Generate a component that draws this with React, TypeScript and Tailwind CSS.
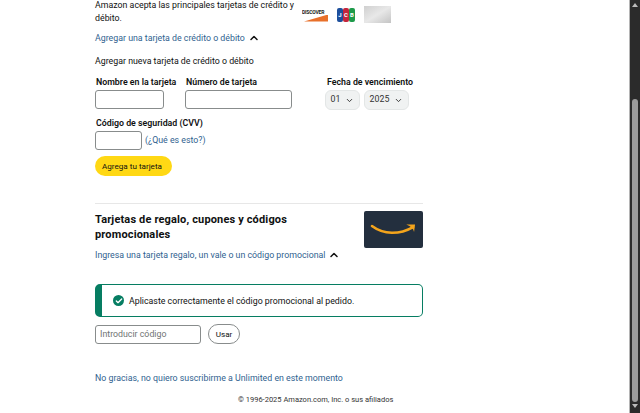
import { Check, ChevronDown, ChevronUp } from "lucide-react"

function LinkRow({ text }: { text: string }) {
  return (
    <div className="flex items-center gap-[3px] text-[8.8px] leading-[14px] text-[#2f5f8f]">
      <span>{text}</span>
      <ChevronUp className="w-[12px] h-[12px] text-[#111]" strokeWidth={3} />
    </div>
  )
}

function SelectBox({ value, width }: { value: string; width: string }) {
  return (
    <div className={`flex items-center justify-center gap-[5px] h-[20px] rounded-[6px] bg-[#f0f2f2] border border-[#e3e6e6] text-[8.8px] text-[#333] ${width}`}>
      <span>{value}</span>
      <ChevronDown className="w-[9px] h-[9px]" strokeWidth={2.5} />
    </div>
  )
}

function CardLogos() {
  return (
    <div className="flex items-center gap-[9px] pl-[7px] pt-[6px]">
      <div className="relative w-[26px] h-[14px] overflow-hidden">
        <span className="block text-[5px] leading-[8px] font-bold tracking-[-0.2px] text-[#222]">DISCOVER</span>
        <div className="absolute right-0 bottom-0 w-[24px] h-[7px] bg-[#e8702a] [clip-path:polygon(100%_0,100%_100%,0_100%)]" />
      </div>
      <div className="flex items-center h-[14px] w-[18px]">
        <div className="flex items-center justify-center flex-1 h-full rounded-[2px] bg-[#1d4f9c] text-[6px] font-bold text-white">J</div>
        <div className="flex items-center justify-center flex-1 h-full rounded-[2px] bg-[#c3263c] text-[6px] font-bold text-white">C</div>
        <div className="flex items-center justify-center flex-1 h-full rounded-[2px] bg-[#1d9a4a] text-[6px] font-bold text-white">B</div>
      </div>
      <div className="w-[27px] h-[17px] bg-gradient-to-br from-[#d0d0d0] via-[#e8e8e8] to-[#c4c4c4]" />
    </div>
  )
}

export default function App() {
  return (
    <div className="flex h-[413px] w-[640px] overflow-hidden bg-white text-[#0f1111] [font-family:Roboto,sans-serif]">
      <main className="flex-1 pl-[95px]">
        <div className="w-[328px]">
          <div className="flex -mt-[1px]">
            <p className="w-[200px] text-[8.8px] leading-[12.5px] shrink-0">
              Amazon acepta las principales tarjetas de crédito y débito.
            </p>
            <CardLogos />
          </div>

          <div className="mt-[7px]">
            <LinkRow text="Agregar una tarjeta de crédito o débito" />
          </div>
          <p className="mt-[9px] text-[8.8px] leading-[14px]">Agregar nueva tarjeta de crédito o débito</p>

          <div className="flex mt-[7px]">
            <div className="w-[90px]">
              <label className="block pl-[1px] text-[8.8px] leading-[14px] font-semibold whitespace-nowrap">Nombre en la tarjeta</label>
              <div className="mt-[1px] w-[69px] h-[19px] rounded-[3px] border border-[#888c8c] bg-white" />
            </div>
            <div className="w-[140px]">
              <label className="block pl-[1px] text-[8.8px] leading-[14px] font-semibold">Número de tarjeta</label>
              <div className="mt-[1px] w-[107px] h-[19px] rounded-[3px] border border-[#888c8c] bg-white" />
            </div>
            <div>
              <label className="block pl-[2px] text-[8.8px] leading-[14px] font-semibold whitespace-nowrap">Fecha de vencimiento</label>
              <div className="flex gap-[4px] mt-[1px]">
                <SelectBox value="01" width="w-[35px]" />
                <SelectBox value="2025" width="w-[45px]" />
              </div>
            </div>
          </div>

          <label className="block mt-[6px] pl-[1px] text-[8.8px] leading-[14px] font-semibold">Código de seguridad (CVV)</label>
          <div className="flex items-center gap-[3px] mt-[1px]">
            <div className="w-[47px] h-[19px] rounded-[3px] border border-[#888c8c] bg-white" />
            <span className="text-[8.8px] text-[#2f5f8f]">(¿Qué es esto?)</span>
          </div>

          <button className="block mt-[6px] w-[77px] h-[20px] rounded-full bg-[#ffd814] pr-[3px] text-[8.1px] text-[#0f1111]">
            Agrega tu tarjeta
          </button>

          <hr className="mt-[27px] border-t border-[#e7e7e7]" />

          <div className="flex justify-between mt-[7px]">
            <h2 className="w-[230px] pt-[1px] text-[11px] leading-[15px] font-bold tracking-[0.15px]">
              Tarjetas de regalo, cupones y códigos promocionales
            </h2>
            <div className="flex items-center justify-center w-[59px] h-[37px] rounded-[2px] bg-[#232f3e]">
              <svg viewBox="0 0 48 16" className="w-[47px] h-[16px]">
                <path d="M2 4 C14 13 30 13 44 5" fill="none" stroke="#f3a41c" strokeWidth="2.6" strokeLinecap="round" />
                <path d="M37 2.5 L46 2.5 L45 10 C44.5 7 42 4.5 37 2.5 Z" fill="#f3a41c" />
              </svg>
            </div>
          </div>

          <div className="mt-[0px]">
            <LinkRow text="Ingresa una tarjeta regalo, un vale o un código promocional" />
          </div>

          <div className="flex items-center mt-[22px] h-[33px] rounded-[5px] border border-[#067d62] border-l-[7px] pl-[11px] gap-[5px]">
            <span className="flex items-center justify-center w-[11px] h-[11px] rounded-full bg-[#067d62]">
              <Check className="w-[8px] h-[8px] text-white" strokeWidth={4} />
            </span>
            <span className="text-[8.8px] leading-[14px]">Aplicaste correctamente el código promocional al pedido.</span>
          </div>

          <div className="flex items-center gap-[7px] mt-[7px]">
            <div className="flex items-center w-[106px] h-[19px] rounded-[3px] border border-[#888c8c] pl-[4px] pt-[2px] text-[8.8px] text-[#6f7373]">
              Introducir código
            </div>
            <button className="w-[32px] h-[20px] rounded-full border border-[#888c8c] bg-white text-[8.1px]">Usar</button>
          </div>

          <p className="mt-[27px] text-[8.8px] leading-[14px] text-[#2f5f8f]">
            No gracias, no quiero suscribirme a Unlimited en este momento
          </p>
        </div>
        <p className="mt-[9px] w-[328px] pl-[143px] text-[7.5px] leading-[12px] whitespace-nowrap text-[#333]">
          © 1996-2025 Amazon.com, Inc. o sus afiliados
        </p>
      </main>

      <aside className="flex flex-col items-center w-[11px] shrink-0 bg-[#2b2b2b] border-l border-[#b5b5b5]">
        <div className="mt-[3px] h-0 w-0 border-x-[3px] border-x-transparent border-b-[4px] border-b-[#bbb]" />
        <div className="mt-[92px] w-[6px] h-[303px] rounded-full bg-[#9b9b9b]" />
        <div className="mt-[2px] h-0 w-0 border-x-[3px] border-x-transparent border-t-[4px] border-t-[#bbb]" />
      </aside>
    </div>
  )
}
